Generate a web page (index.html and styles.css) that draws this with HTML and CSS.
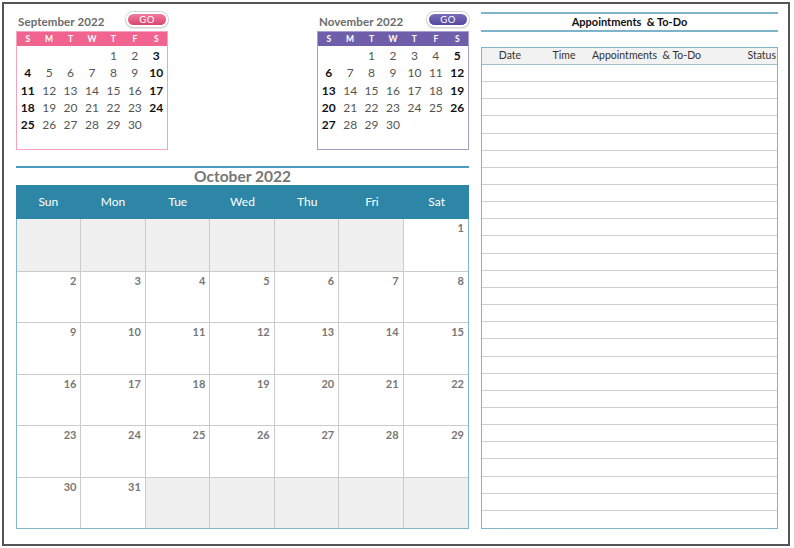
FILE: index.html
```html
<!DOCTYPE html>
<html>
<head>
<meta charset="utf-8">
<link rel="stylesheet" href="styles.css">
</head>
<body>
<div class="frame">
  <div class="left">
    <div class="minis">
      <div class="mini pink">
        <div class="mini-head"><span class="mini-title">September 2022</span><span class="go">GO</span></div>
        <div class="mini-box">
          <div class="mini-days"><span>S</span><span>M</span><span>T</span><span>W</span><span>T</span><span>F</span><span>S</span></div>
          <div class="mini-grid">
            <span></span><span></span><span></span><span></span><span>1</span><span>2</span><span class="we">3</span>
            <span class="we">4</span><span>5</span><span>6</span><span>7</span><span>8</span><span>9</span><span class="we">10</span>
            <span class="we">11</span><span>12</span><span>13</span><span>14</span><span>15</span><span>16</span><span class="we">17</span>
            <span class="we">18</span><span>19</span><span>20</span><span>21</span><span>22</span><span>23</span><span class="we">24</span>
            <span class="we">25</span><span>26</span><span>27</span><span>28</span><span>29</span><span>30</span><span></span>
          </div>
        </div>
      </div>
      <div class="mini purple">
        <div class="mini-head"><span class="mini-title">November 2022</span><span class="go">GO</span></div>
        <div class="mini-box">
          <div class="mini-days"><span>S</span><span>M</span><span>T</span><span>W</span><span>T</span><span>F</span><span>S</span></div>
          <div class="mini-grid">
            <span></span><span></span><span>1</span><span>2</span><span>3</span><span>4</span><span class="we">5</span>
            <span class="we">6</span><span>7</span><span>8</span><span>9</span><span>10</span><span>11</span><span class="we">12</span>
            <span class="we">13</span><span>14</span><span>15</span><span>16</span><span>17</span><span>18</span><span class="we">19</span>
            <span class="we">20</span><span>21</span><span>22</span><span>23</span><span>24</span><span>25</span><span class="we">26</span>
            <span class="we">27</span><span>28</span><span>29</span><span>30</span><span></span><span></span><span></span>
          </div>
        </div>
      </div>
    </div>
    <div class="month">
      <div class="month-title">October 2022</div>
      <div class="month-days"><span>Sun</span><span>Mon</span><span>Tue</span><span>Wed</span><span>Thu</span><span>Fri</span><span>Sat</span></div>
      <div class="month-grid">
        <div class="cell off"></div><div class="cell off"></div><div class="cell off"></div><div class="cell off"></div><div class="cell off"></div><div class="cell off"></div><div class="cell">1</div>
        <div class="cell">2</div><div class="cell">3</div><div class="cell">4</div><div class="cell">5</div><div class="cell">6</div><div class="cell">7</div><div class="cell">8</div>
        <div class="cell">9</div><div class="cell">10</div><div class="cell">11</div><div class="cell">12</div><div class="cell">13</div><div class="cell">14</div><div class="cell">15</div>
        <div class="cell">16</div><div class="cell">17</div><div class="cell">18</div><div class="cell">19</div><div class="cell">20</div><div class="cell">21</div><div class="cell">22</div>
        <div class="cell">23</div><div class="cell">24</div><div class="cell">25</div><div class="cell">26</div><div class="cell">27</div><div class="cell">28</div><div class="cell">29</div>
        <div class="cell">30</div><div class="cell">31</div><div class="cell off"></div><div class="cell off"></div><div class="cell off"></div><div class="cell off"></div><div class="cell off"></div>
      </div>
    </div>
  </div>
  <div class="right">
    <div class="panel-title">Appointments &nbsp;&amp; To-Do</div>
    <div class="table">
      <div class="thead"><span class="c-date">Date</span><span class="c-time">Time</span><span class="c-app">Appointments &nbsp;&amp; To-Do</span><span class="c-status">Status</span></div>
      <div class="tbody">
        <div class="row"></div><div class="row"></div><div class="row"></div><div class="row"></div><div class="row"></div><div class="row"></div><div class="row"></div><div class="row"></div><div class="row"></div>
        <div class="row"></div><div class="row"></div><div class="row"></div><div class="row"></div><div class="row"></div><div class="row"></div><div class="row"></div><div class="row"></div><div class="row"></div>
        <div class="row"></div><div class="row"></div><div class="row"></div><div class="row"></div><div class="row"></div><div class="row"></div><div class="row"></div><div class="row"></div><div class="row"></div>
      </div>
    </div>
  </div>
</div>
</body>
</html>
```
FILE: styles.css
```css
* { box-sizing: border-box; }
html, body { margin: 0; padding: 0; background: #fff; }
body { font-family: Lato, "Open Sans", sans-serif; width: 794px; height: 548px; overflow: hidden; }

.frame {
  margin: 2px 0 0 2px;
  width: 788px;
  height: 544px;
  border: 2px solid #555;
  padding: 8px 10px 15px 12px;
  display: flex;
  gap: 12px;
}

.left { width: 453px; display: flex; flex-direction: column; }
.right { width: 297px; display: flex; flex-direction: column; }

.minis { display: flex; justify-content: space-between; }
.mini { width: 152px; }
.mini-head { height: 19px; display: flex; align-items: flex-start; justify-content: space-between; padding-left: 2px; }
.mini-title { font-weight: 700; font-size: 11.5px; color: #6b6b6b; margin-top: 3px; letter-spacing: 0.1px; }
.go {
  width: 42px; height: 15px; margin-right: 0;
  border-radius: 8px;
  border: 2px solid #fff;
  box-shadow: 0 0 0 1px #d4d4d4, 0 1px 2px rgba(0,0,0,0.35);
  color: #fff; font-size: 9.5px; line-height: 11px; text-align: center; letter-spacing: 0.5px;
}
.pink .go { background: linear-gradient(#f27ba0, #d8466f); }
.purple .go { background: linear-gradient(#7b6cbc, #55479a); }

.mini-box { height: 119px; border: 1px solid; }
.pink .mini-box { border-color: #f3a3bd; }
.purple .mini-box { border-color: #a79fcb; }
.mini-days { height: 14px; display: grid; grid-template-columns: repeat(7, 1fr); color: #fff; font-size: 8.5px; font-weight: 700; line-height: 14px; text-align: center; }
.pink .mini-days { background: #f0648f; }
.purple .mini-days { background: #6f5fab; }
.mini-grid { display: grid; grid-template-columns: repeat(7, 1fr); grid-auto-rows: 17.3px; padding-top: 1px; font-size: 12px; color: #555; text-align: center; line-height: 17px; }
.mini-grid .we { color: #111; font-weight: 700; }

.month { margin-top: 16px; border-top: 2px solid #4b9dc1; }
.month-title { height: 17px; text-align: center; font-weight: 700; font-size: 15.5px; line-height: 17px; color: #777; }
.month-days { height: 34px; background: #2e86a7; display: grid; grid-template-columns: repeat(7, 1fr); color: #fff; font-size: 12px; line-height: 34px; text-align: center; }
.month-grid {
  height: 310px;
  border: 1px solid #7fb7c9;
  border-top: none;
  display: grid;
  grid-template-columns: repeat(7, 1fr);
  grid-template-rows: repeat(6, 1fr);
}
.cell {
  border-right: 1px solid #cbcbcb;
  border-top: 1px solid #cbcbcb;
  text-align: right;
  padding: 2px 4px 0 0;
  font-size: 11px;
  font-weight: 700;
  color: #777;
}
.cell:nth-child(7n) { border-right: none; }
.cell:nth-child(-n+7) { border-top: none; }
.cell.off { background: #f0f0f0; }

.panel-title {
  height: 20px;
  border-top: 2px solid #7db4c9;
  border-bottom: 2px solid #7db4c9;
  text-align: center;
  font-weight: 700;
  font-size: 11px;
  line-height: 16px;
  color: #111;
}
.table { margin-top: 15px; height: 482px; border: 1px solid #7fb5c6; display: flex; flex-direction: column; }
.thead {
  height: 17px; background: #f2f2f2; border-bottom: 1px solid #9fbfca;
  display: flex; font-size: 10.5px; line-height: 15px; color: #333;
}
.c-date { width: 56px; text-align: center; }
.c-time { width: 52px; text-align: center; }
.c-app { flex: 1; padding-left: 2px; }
.c-status { padding-right: 1px; }
.tbody { flex: 1; display: grid; grid-template-rows: repeat(27, 1fr); }
.row { border-bottom: 1px solid #cfcfcf; }
.row:last-child { border-bottom: none; }
```
